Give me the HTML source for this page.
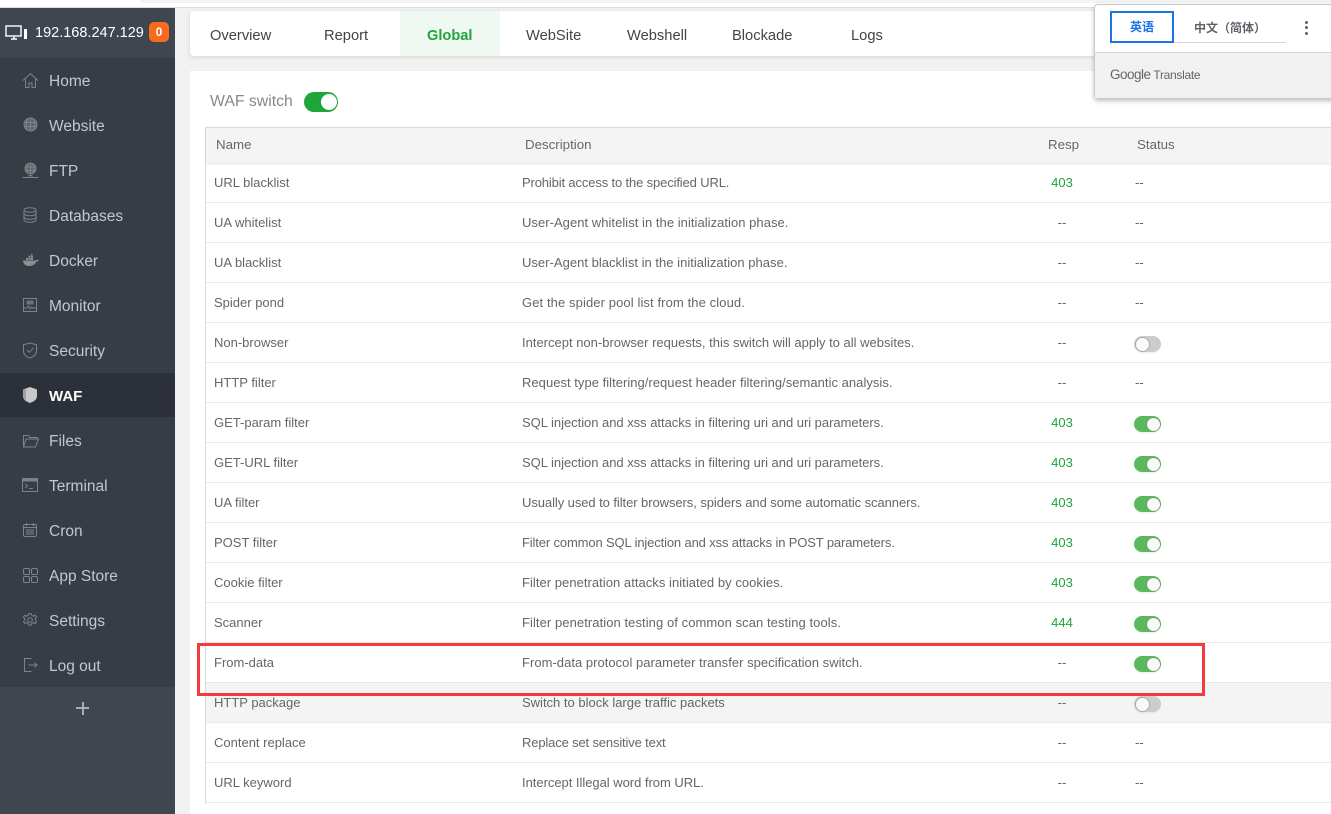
<!DOCTYPE html>
<html><head><meta charset="utf-8">
<style>
html,body{margin:0;padding:0}
body{width:1331px;height:814px;overflow:hidden;position:relative;background:#f1f1f1;font-family:"Liberation Sans","Noto Sans CJK SC",sans-serif}
div,span,svg{position:absolute;display:block;box-sizing:border-box}
.t{white-space:nowrap}
.m{left:49px;font-size:15.500px;color:#bfc9d3;line-height:20px;height:20px;margin-top:1px}
.ic{left:22px;width:17px;height:17px;fill:none;stroke:#7d8388;stroke-width:1}
.tab{top:25px;font-size:14.700px;line-height:20px;color:#444;white-space:nowrap;margin-top:1px}
.n,.d,.r,.s{font-size:13px;line-height:18px;color:#666;white-space:nowrap;margin-top:1px}
.n{left:214px}.d{left:522px}
.r{left:1042px;width:40px;text-align:center}.g{color:#20a53a}
.s{left:1135px}
.h{font-size:13.300px;line-height:18px;color:#666;white-space:nowrap;top:136px}
.l{left:206px;right:0;height:1px;background:#e8e8e8}
.sw{left:1134px;width:27px;height:16px;border-radius:8px;background:#5cb85c;box-shadow:0 2px 2px -1px rgba(0,0,0,.08)}
.sw:after{content:"";position:absolute;right:1.500px;top:1.500px;width:13px;height:13px;border-radius:50%;background:#fafafa;box-shadow:0 0 1px rgba(0,0,0,.5)}
.sw.off{background:#ccc}
.sw.off:after{right:auto;left:1.500px;box-shadow:0 0 0 1px #aaa}
</style></head><body>
<div style="left:0;top:0;width:1331px;height:7px;background:#fff"></div>
<div style="left:140px;top:0;width:1191px;height:3px;background:#f1f3f4;border-radius:0 0 0 6px"></div>
<div style="left:0;top:7px;width:1331px;height:1px;background:#dcdcdc"></div>

<div style="left:0;top:8px;width:175px;height:806px;background:#363d45"></div>
<div style="left:0;top:8px;width:175px;height:50px;background:#3f4650"></div>
<div style="left:0;top:687px;width:175px;height:127px;background:#3f4650"></div>
<div style="left:0;top:373px;width:175px;height:44px;background:#2c3038"></div>

<svg style="left:5px;top:25px;width:23px;height:16px" viewBox="0 0 23 16" fill="none" stroke="#fff" stroke-width="1.4"><rect x="1" y="1" width="15" height="10"/><path d="M6 14h6M9 11v3"/><rect x="19" y="4" width="3" height="10" fill="#fff" stroke="none"/></svg>
<div class="t" style="left:35px;top:23px;font-size:14.500px;line-height:20px;color:#fff">192.168.247.129</div>
<div class="t" style="left:149px;top:22px;width:20px;height:20px;border-radius:5px;background:#f96a1c;color:#fff;font-size:12px;font-weight:bold;line-height:20px;text-align:center">0</div>

<svg class="ic" style="top:72px" viewBox="0 0 17 17"><path d="M1 8.500 8.500 1.500 16 8.500M3.500 7v8.500h3.500v-4.500h3v4.500h3.500V7"/></svg>
<svg class="ic" style="top:117px;width:15px;height:15px;left:23px" viewBox="0 0 15 15"><circle cx="7.500" cy="7.500" r="6.500" fill="#5d6369"/><path d="M1 5.500h13M1 9.500h13M7.500 1v13M4.500 2c-1.500 3-1.500 8 0 11M10.500 2c1.500 3 1.500 8 0 11"/></svg>
<svg class="ic" style="top:162px" viewBox="0 0 17 17"><circle cx="8.500" cy="6.500" r="5.500" fill="#5d6369"/><path d="M3 5h11M3 8.500h11M8.500 1v11M6 2c-1.300 3-1.300 6 0 9M11 2c1.300 3 1.300 6 0 9M0.500 15.500h16M7 13.500h3v2H7z"/></svg>
<svg class="ic" style="top:207px;left:23px;width:14px;height:16px" viewBox="0 0 14 16"><ellipse cx="7" cy="3" rx="6" ry="2.300"/><path d="M1 3v10c0 1.300 2.700 2.300 6 2.300s6-1 6-2.300V3M1 6.500c0 1.300 2.700 2.300 6 2.300s6-1 6-2.300M1 10c0 1.300 2.700 2.300 6 2.300s6-1 6-2.300"/></svg>
<svg class="ic" style="top:254px;left:23px;width:16px;height:12px;stroke:none;fill:#8a8f94" viewBox="0 0 16 12"><path d="M0 6.500h13c.7-.8 1.800-1 3-.6-.6 1.300-1.700 1.800-2.800 1.800C12 10.500 9.500 12 6 12 2.500 12 .3 10 0 6.500z"/><path d="M3 4h2v2H3zM5.500 4h2v2h-2zM8 4h2v2H8zM5.500 1.700h2v2h-2zM8 1.700h2v2H8zM8 0h1.500v1.400H8z"/></svg>
<svg class="ic" style="top:298px;left:23px;width:14px;height:14px" viewBox="0 0 14 14"><rect x=".5" y=".5" width="13" height="13"/><rect x="3.500" y="2.500" width="7" height="4" fill="#6d7378" stroke="none"/><path d="M1 10h3l1.500-2 1.500 3 1.500-2 1 1H13"/></svg>
<svg class="ic" style="top:342px;left:23px;width:14px;height:17px" viewBox="0 0 14 17"><path d="M7 1 13.500 2.800V9c0 3.500-3 5.800-6.500 7C3.500 14.800.5 12.500.5 9V2.800zM3.800 7.800 6.300 10.300 10.500 5.800"/></svg>
<svg class="ic" style="top:387px;left:23px;width:14px;height:16px;stroke:none" viewBox="0 0 14 16"><path fill="#c9c9c9" d="M7 0 14 2.500V9c0 3.500-3 5.500-7 7-4-1.500-7-3.500-7-7V2.500z"/><path fill="#a3a3a3" d="M0 2.500 3 1.200V14.200C1.200 13 0 11.200 0 9z"/></svg>
<svg class="ic" style="top:434px;left:23px;width:16px;height:14px" viewBox="0 0 16 14"><path d="M.5 13V1.500h5l1.500 2h7V5M.5 13h12L15.500 5H3z"/></svg>
<svg class="ic" style="top:478px;left:22px;width:16px;height:14px" viewBox="0 0 16 14"><rect x=".5" y=".5" width="15" height="13"/><rect x=".5" y=".5" width="15" height="2.500" fill="#7d8388"/><path d="M3 6l2.500 2L3 10M7 10.500h4"/></svg>
<svg class="ic" style="top:523px;left:23px;width:14px;height:14px" viewBox="0 0 14 14"><rect x=".5" y="1.500" width="13" height="12" rx="1.500"/><path d="M3.500 0v3M10.500 0v3M.5 4.500h13M3 7h8M3 9h8M3 11h8" /></svg>
<svg class="ic" style="top:568px;left:23px;width:15px;height:15px" viewBox="0 0 15 15"><rect x=".5" y=".5" width="6" height="6" rx="1.500"/><rect x="8.500" y=".5" width="6" height="6" rx="1.500"/><rect x=".5" y="8.500" width="6" height="6" rx="1.500"/><rect x="8.500" y="8.500" width="6" height="6" rx="1.500"/></svg>
<svg class="ic" style="top:613px;left:23px;width:14px;height:14px" viewBox="0 0 14 14"><path d="M5.500.7h3l.4 1.800 1.700.7 1.600-1 1.400 2-1.300 1.300v1.800l1.300 1.300-1.400 2-1.600-1-1.700.7-.4 1.800h-3l-.4-1.800-1.700-.7-1.600 1-1.400-2 1.300-1.300V5.500L.4 4.200l1.400-2 1.600 1 1.700-.7z"/><circle cx="7" cy="7" r="2.300"/></svg>
<svg class="ic" style="top:658px;left:24px;width:14px;height:14px" viewBox="0 0 14 14"><path d="M7.500.5H.5v13h7M4.500 7h8.500M10.500 4.800 13 7l-2.500 2.200"/></svg>

<div class="m t" style="top:71px">Home</div>
<div class="m t" style="top:116px">Website</div>
<div class="m t" style="top:161px">FTP</div>
<div class="m t" style="top:206px">Databases</div>
<div class="m t" style="top:251px">Docker</div>
<div class="m t" style="top:296px">Monitor</div>
<div class="m t" style="top:341px">Security</div>
<div class="m t" style="top:386px;color:#fff;font-weight:bold;font-size:15px">WAF</div>
<div class="m t" style="top:431px">Files</div>
<div class="m t" style="top:476px">Terminal</div>
<div class="m t" style="top:521px">Cron</div>
<div class="m t" style="top:566px">App Store</div>
<div class="m t" style="top:611px">Settings</div>
<div class="m t" style="top:656px">Log out</div>
<div style="left:76px;top:707px;width:13px;height:2px;background:#a9aeb3"></div>
<div style="left:82px;top:702px;width:2px;height:13px;background:#a9aeb3"></div>

<div style="left:190px;top:11px;width:1141px;height:45px;background:#fff;border-radius:4px 0 0 4px;box-shadow:0 1px 4px rgba(0,0,0,.12)"></div>
<div style="left:400px;top:11px;width:100px;height:45px;background:#eff8f1"></div>
<div class="tab" style="left:210px">Overview</div>
<div class="tab" style="left:324px">Report</div>
<div class="tab" style="left:427px;color:#20a53a;font-weight:bold;font-size:14.600px">Global</div>
<div class="tab" style="left:526px">WebSite</div>
<div class="tab" style="left:627px">Webshell</div>
<div class="tab" style="left:732px">Blockade</div>
<div class="tab" style="left:851px">Logs</div>

<div style="left:190px;top:71px;width:1141px;height:743px;background:#fff"></div>
<div class="t" style="left:210px;top:92px;font-size:15.800px;line-height:20px;color:#888">WAF switch</div>
<div style="left:304px;top:92px;width:34px;height:20px;border-radius:10px;background:#20a53a"></div>
<div style="left:321px;top:94px;width:16px;height:16px;border-radius:50%;background:#fff"></div>

<div style="left:205px;top:127px;width:1px;height:677px;background:#ddd"></div>
<div style="left:206px;top:127px;width:1125px;height:36px;background:#f4f4f4;border-top:1px solid #ddd;box-shadow:0 1px 2px rgba(0,0,0,.12)"></div>
<div class="h" style="left:216px">Name</div>
<div class="h" style="left:525px">Description</div>
<div class="h" style="left:1048px">Resp</div>
<div class="h" style="left:1137px">Status</div>

<div style="left:206px;top:683px;width:1125px;height:40px;background:#f4f4f4"></div>

<div class="l" style="top:202px"></div><div class="l" style="top:242px"></div><div class="l" style="top:282px"></div><div class="l" style="top:322px"></div><div class="l" style="top:362px"></div><div class="l" style="top:402px"></div><div class="l" style="top:442px"></div><div class="l" style="top:482px"></div><div class="l" style="top:522px"></div><div class="l" style="top:562px"></div><div class="l" style="top:602px"></div><div class="l" style="top:642px"></div><div class="l" style="top:682px"></div><div class="l" style="top:722px"></div><div class="l" style="top:762px"></div><div class="l" style="top:802px"></div>

<div class="n" style="top:173px">URL blacklist</div><div class="d" style="top:173px;letter-spacing:-.14px">Prohibit access to the specified URL.</div><div class="r g" style="top:173px">403</div><div class="s" style="top:173px">--</div>
<div class="n" style="top:213px">UA whitelist</div><div class="d" style="top:213px;letter-spacing:.04px">User-Agent whitelist in the initialization phase.</div><div class="r" style="top:213px">--</div><div class="s" style="top:213px">--</div>
<div class="n" style="top:253px">UA blacklist</div><div class="d" style="top:253px;letter-spacing:.02px">User-Agent blacklist in the initialization phase.</div><div class="r" style="top:253px">--</div><div class="s" style="top:253px">--</div>
<div class="n" style="top:293px">Spider pond</div><div class="d" style="top:293px;letter-spacing:.1px">Get the spider pool list from the cloud.</div><div class="r" style="top:293px">--</div><div class="s" style="top:293px">--</div>
<div class="n" style="top:333px">Non-browser</div><div class="d" style="top:333px">Intercept non-browser requests, this switch will apply to all websites.</div><div class="r" style="top:333px">--</div><div class="sw off" style="top:336px"></div>
<div class="n" style="top:373px">HTTP filter</div><div class="d" style="top:373px;letter-spacing:.03px">Request type filtering/request header filtering/semantic analysis.</div><div class="r" style="top:373px">--</div><div class="s" style="top:373px">--</div>
<div class="n" style="top:413px">GET-param filter</div><div class="d" style="top:413px;letter-spacing:-.03px">SQL injection and xss attacks in filtering uri and uri parameters.</div><div class="r g" style="top:413px">403</div><div class="sw" style="top:416px"></div>
<div class="n" style="top:453px">GET-URL filter</div><div class="d" style="top:453px;letter-spacing:-.03px">SQL injection and xss attacks in filtering uri and uri parameters.</div><div class="r g" style="top:453px">403</div><div class="sw" style="top:456px"></div>
<div class="n" style="top:493px">UA filter</div><div class="d" style="top:493px;letter-spacing:-.07px">Usually used to filter browsers, spiders and some automatic scanners.</div><div class="r g" style="top:493px">403</div><div class="sw" style="top:496px"></div>
<div class="n" style="top:533px">POST filter</div><div class="d" style="top:533px;letter-spacing:-.14px">Filter common SQL injection and xss attacks in POST parameters.</div><div class="r g" style="top:533px">403</div><div class="sw" style="top:536px"></div>
<div class="n" style="top:573px">Cookie filter</div><div class="d" style="top:573px;letter-spacing:.04px">Filter penetration attacks initiated by cookies.</div><div class="r g" style="top:573px">403</div><div class="sw" style="top:576px"></div>
<div class="n" style="top:613px">Scanner</div><div class="d" style="top:613px;letter-spacing:.07px">Filter penetration testing of common scan testing tools.</div><div class="r g" style="top:613px">444</div><div class="sw" style="top:616px"></div>
<div class="n" style="top:653px">From-data</div><div class="d" style="top:653px;letter-spacing:.03px">From-data protocol parameter transfer specification switch.</div><div class="r" style="top:653px">--</div><div class="sw" style="top:656px"></div>
<div class="n" style="top:693px">HTTP package</div><div class="d" style="top:693px">Switch to block large traffic packets</div><div class="r" style="top:693px">--</div><div class="sw off" style="top:696px"></div>
<div class="n" style="top:733px">Content replace</div><div class="d" style="top:733px;letter-spacing:-.15px">Replace set sensitive text</div><div class="r" style="top:733px">--</div><div class="s" style="top:733px">--</div>
<div class="n" style="top:773px">URL keyword</div><div class="d" style="top:773px;letter-spacing:-.03px">Intercept Illegal word from URL.</div><div class="r" style="top:773px">--</div><div class="s" style="top:773px">--</div>

<div style="left:197px;top:643px;width:1008px;height:53px;border:3px solid #f33b3b"></div>

<div style="left:1094px;top:4px;width:245px;height:95px;background:#fff;border:1px solid #c8c8c8;border-radius:4px 0 0 4px;box-shadow:0 2px 5px rgba(0,0,0,.25)"></div>
<div style="left:1095px;top:52px;width:236px;height:46px;background:#f1f1f1;border-top:1px solid #d8d8d8"></div>
<div style="left:1110px;top:42px;width:176px;height:1px;background:#d5d5d5"></div>
<div class="t" style="left:1110px;top:11px;width:64px;height:32px;border:2px solid #1a73e8;color:#1a73e8;font-size:12px;line-height:29px;text-align:center;font-weight:bold;background:#fff">英语</div>
<div class="t" style="left:1194px;top:19px;font-size:12px;line-height:18px;color:#5f6368;font-weight:bold">中文（简体）</div>
<div style="left:1305px;top:21px;width:3px;height:3px;border-radius:50%;background:#5f6368"></div>
<div style="left:1305px;top:26px;width:3px;height:3px;border-radius:50%;background:#5f6368"></div>
<div style="left:1305px;top:32px;width:3px;height:3px;border-radius:50%;background:#5f6368"></div>
<div class="t" style="left:1110px;top:66px;font-size:12px;line-height:18px;color:#666;letter-spacing:-.3px"><span style="position:static;display:inline;font-size:13.500px;letter-spacing:-.5px">Google</span> Translate</div>
</body></html>
